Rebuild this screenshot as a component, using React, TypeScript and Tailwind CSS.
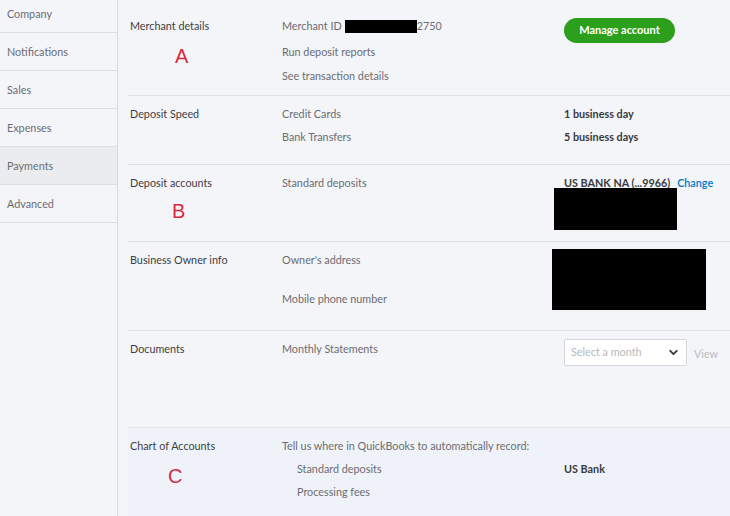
import React from "react"
import { ChevronDown } from "lucide-react"

const navItems = ["Company", "Notifications", "Sales", "Expenses", "Payments", "Advanced"]

function Redacted({ className }: { className: string }) {
  return <div className={`relative bg-black ${className}`} />
}

export default function App() {
  return (
    <div className="flex h-[516px] w-[730px] overflow-hidden bg-[#f4f5f8] font-['Lato',sans-serif] text-[10.8px] text-[#6b6c72]">
      {/* settings nav */}
      <aside className="w-[118px] shrink-0 border-r border-[#d9dadf] bg-[#f4f5f8]">
        <ul className="-mt-[5px]">
          {navItems.map((item) => (
            <li
              key={item}
              className={`flex h-[38px] items-center border-b border-[#dedfe3] pl-[7px] pt-[2px] ${
                item === "Payments" ? "bg-[#ebecf0]" : ""
              }`}
            >
              {item}
            </li>
          ))}
        </ul>
      </aside>

      <main className="flex flex-1 flex-col pl-[10px]">
        {/* Merchant details */}
        <section className="grid h-[96px] grid-cols-[152px_282px_1fr] border-b border-[#dfe1e6] pl-[2px] pt-[14px]">
          <div className="flex flex-col">
            <div className="flex h-[25px] items-center text-[#3d3e43]">Merchant details</div>
            <div className="ml-[45px] mt-[5px] font-['Liberation_Sans',sans-serif] text-[20px] leading-[24px] text-[#d8293b]">A</div>
          </div>
          <div className="flex flex-col">
            <div className="flex h-[25px] items-center">
              Merchant ID
              <Redacted className="ml-[3px] h-[13px] w-[72px]" />
              2750
            </div>
            <div className="flex h-[26px] items-center">Run deposit reports</div>
            <div className="flex h-[23px] items-center">See transaction details</div>
          </div>
          <div>
            <button className="mt-[4px] h-[25px] w-[111px] rounded-full bg-[#2ca01c] text-[11px] font-bold text-white">
              Manage account
            </button>
          </div>
        </section>

        {/* Deposit Speed */}
        <section className="grid h-[69px] grid-cols-[152px_282px_1fr] border-b border-[#dfe1e6] pl-[2px] pt-[7px]">
          <div className="flex h-[23px] items-center text-[#3d3e43]">Deposit Speed</div>
          <div className="flex flex-col">
            <div className="flex h-[23px] items-center">Credit Cards</div>
            <div className="flex h-[23px] items-center">Bank Transfers</div>
          </div>
          <div className="flex flex-col font-bold text-[#393a3d]">
            <div className="flex h-[23px] items-center">1 business day</div>
            <div className="flex h-[23px] items-center">5 business days</div>
          </div>
        </section>

        {/* Deposit accounts */}
        <section className="grid h-[77px] grid-cols-[152px_282px_1fr] border-b border-[#dfe1e6] pl-[2px] pt-[7px]">
          <div className="flex flex-col">
            <div className="flex h-[23px] items-center text-[#3d3e43]">Deposit accounts</div>
            <div className="ml-[42px] mt-[4px] font-['Liberation_Sans',sans-serif] text-[20px] leading-[24px] text-[#d8293b]">B</div>
          </div>
          <div className="flex h-[23px] items-center">Standard deposits</div>
          <div className="flex flex-col">
            <div className="flex h-[23px] items-center gap-[7px]">
              <span className="font-bold text-[#393a3d]">US BANK NA (...9966)</span>
              <span className="font-semibold text-[#0077c5]">Change</span>
            </div>
            <Redacted className="-ml-[10px] -mt-[7px] h-[42px] w-[123px]" />
          </div>
        </section>

        {/* Business Owner info */}
        <section className="grid h-[89px] grid-cols-[152px_282px_1fr] border-b border-[#dfe1e6] pl-[2px] pt-[6px]">
          <div className="flex h-[24px] items-center text-[#3d3e43]">Business Owner info</div>
          <div className="flex flex-col">
            <div className="flex h-[24px] items-center">Owner's address</div>
            <div className="mt-[15px] flex h-[24px] items-center">Mobile phone number</div>
          </div>
          <div>
            <Redacted className="-ml-[12px] mt-[1px] h-[61px] w-[154px]" />
          </div>
        </section>

        {/* Documents */}
        <section className="grid h-[96px] grid-cols-[152px_282px_1fr] pl-[2px] pt-[6px]">
          <div className="flex h-[24px] items-center text-[#3d3e43]">Documents</div>
          <div className="flex h-[24px] items-center">Monthly Statements</div>
          <div className="mt-[2px] flex items-start gap-[7px]">
            <div className="flex h-[27px] w-[123px] items-center justify-between rounded-[2px] border border-[#d4d7dc] bg-white pl-[6px] pr-[6px]">
              <span className="text-[#b5b8bd]">Select a month</span>
              <ChevronDown size={13} strokeWidth={3.5} className="text-[#393a3d]" />
            </div>
            <span className="mt-[7px] text-[#b8bbc1]">View</span>
          </div>
        </section>

        {/* Chart of Accounts */}
        <section className="grid flex-1 grid-cols-[152px_282px_1fr] border-t border-[#e4e7ec] bg-[#eff3f9] pl-[2px] pt-[7px]">
          <div className="flex flex-col">
            <div className="flex h-[23px] items-center text-[#3d3e43]">Chart of Accounts</div>
            <div className="ml-[38px] mt-[6px] font-['Liberation_Sans',sans-serif] text-[20px] leading-[24px] text-[#d8293b]">C</div>
          </div>
          <div className="flex flex-col">
            <div className="flex h-[23px] items-center">Tell us where in QuickBooks to automatically record:</div>
            <div className="flex h-[23px] items-center pl-[15px]">Standard deposits</div>
            <div className="flex h-[23px] items-center pl-[15px]">Processing fees</div>
          </div>
          <div className="flex flex-col">
            <div className="h-[23px]" />
            <div className="flex h-[23px] items-center font-bold text-[#393a3d]">US Bank</div>
          </div>
        </section>
      </main>
    </div>
  )
}
